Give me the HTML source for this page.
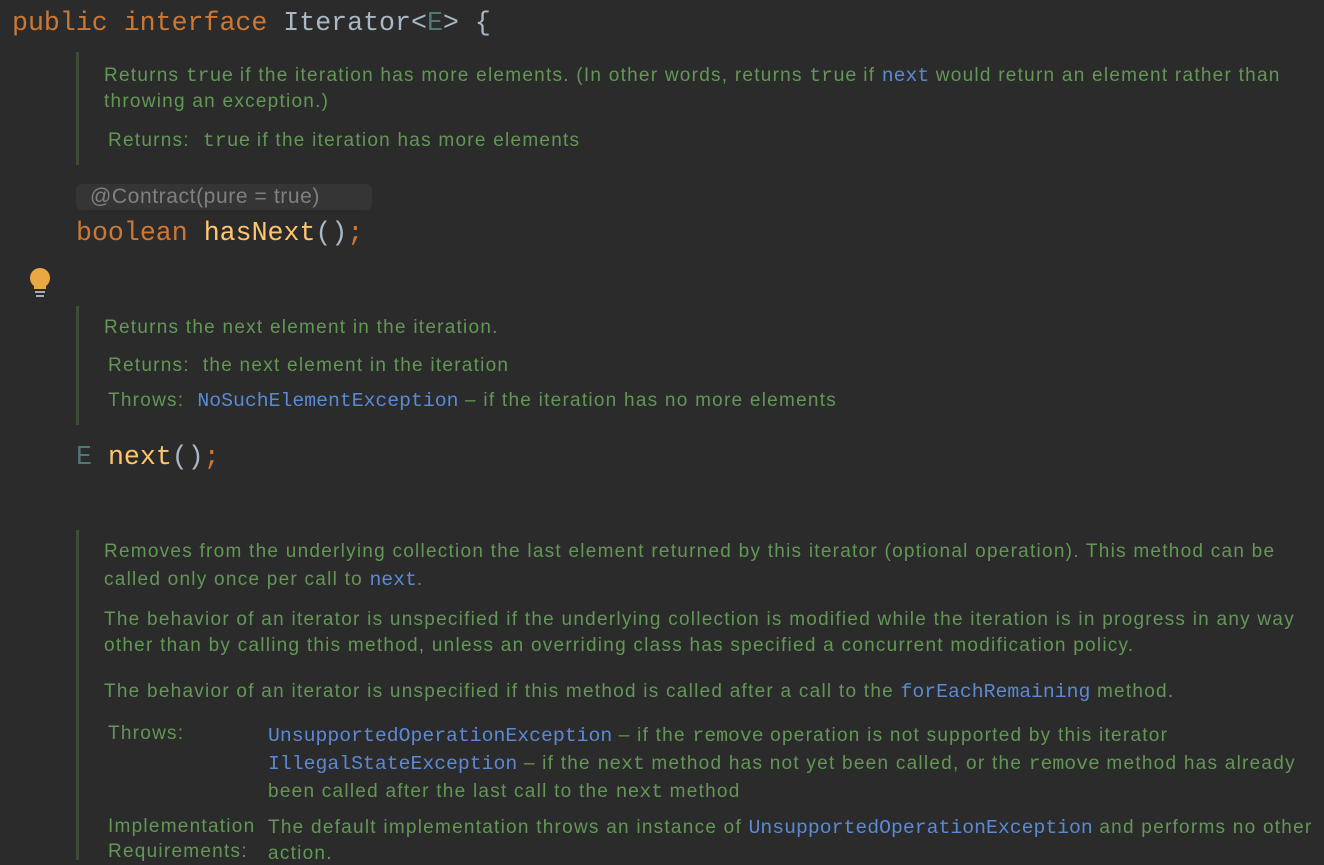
<!DOCTYPE html>
<html><head><meta charset="utf-8"><style>
body{margin:0;width:1324px;height:860px;background:#2b2b2b;overflow:hidden;position:relative;font-family:"Liberation Sans",sans-serif}
.a{position:absolute;white-space:nowrap}
.c{font-family:"Liberation Mono",monospace;font-size:26.6px;line-height:30px;color:#a9b7c6}
.d{font-size:19px;letter-spacing:1.25px;line-height:22px;color:#629755}
.m{font-family:"Liberation Mono",monospace;font-size:19.8px;letter-spacing:0}
.l{color:#5a8ad6;font-family:"Liberation Mono",monospace;font-size:19.8px;letter-spacing:0}
.k{color:#cc7832}.f{color:#ffc66d}.t{color:#507874}
.bar{position:absolute;left:76px;width:3px;background:#3e4d35}
</style></head><body>
<div class="a c" style="left:12px;top:8px"><span class="k">public interface</span> Iterator&lt;<span class="t">E</span>&gt; {</div>
<div class="bar" style="top:52px;height:113px"></div>
<div class="a d" style="left:104px;top:65px">Returns <span class="m">true</span> if the iteration has more elements. (In other words, returns <span class="m">true</span> if <span class="l">next</span> would return an element rather than</div>
<div class="a d" style="left:104px;top:91px">throwing an exception.)</div>
<div class="a d" style="left:108px;top:130px">Returns:&nbsp; <span class="m">true</span> if the iteration has more elements</div>
<div class="a" style="left:76px;top:184px;width:296px;height:26px;background:#353535;border-radius:6px"></div>
<div class="a" style="left:90px;top:184px;font-size:21px;letter-spacing:0.6px;line-height:26px;color:#808080">@Contract(pure = true)</div>
<div class="a c" style="left:76px;top:218px"><span class="k">boolean</span> <span class="f">hasNext</span>()<span class="k">;</span></div>
<svg class="a" style="left:28px;top:267px" width="24" height="30" viewBox="0 0 24 30"><path d="M12 1a10 10 0 0 0-6 18v3h12v-3a10 10 0 0 0-6-18z" fill="#e8a842"/><rect x="7" y="24" width="10" height="2" fill="#aaa"/><rect x="8" y="28" width="8" height="2" fill="#aaa"/></svg>
<div class="bar" style="top:306px;height:119px"></div>
<div class="a d" style="left:104px;top:317px">Returns the next element in the iteration.</div>
<div class="a d" style="left:108px;top:355px">Returns:&nbsp; the next element in the iteration</div>
<div class="a d" style="left:108px;top:390px">Throws:&nbsp; <span class="l">NoSuchElementException</span> – if the iteration has no more elements</div>
<div class="a c" style="left:76px;top:442px"><span class="t">E</span> <span class="f">next</span>()<span class="k">;</span></div>
<div class="bar" style="top:530px;height:330px"></div>
<div class="a d" style="left:104px;top:541px">Removes from the underlying collection the last element returned by this iterator (optional operation). This method can be</div>
<div class="a d" style="left:104px;top:569px">called only once per call to <span class="l">next</span>.</div>
<div class="a d" style="left:104px;top:609px">The behavior of an iterator is unspecified if the underlying collection is modified while the iteration is in progress in any way</div>
<div class="a d" style="left:104px;top:635px">other than by calling this method, unless an overriding class has specified a concurrent modification policy.</div>
<div class="a d" style="left:104px;top:681px">The behavior of an iterator is unspecified if this method is called after a call to the <span class="l">forEachRemaining</span> method.</div>
<div class="a d" style="left:108px;top:723px">Throws:</div>
<div class="a d" style="left:268px;top:725px"><span class="l">UnsupportedOperationException</span> – if the <span class="m">remove</span> operation is not supported by this iterator</div>
<div class="a d" style="left:268px;top:753px"><span class="l">IllegalStateException</span> – if the <span class="m">next</span> method has not yet been called, or the <span class="m">remove</span> method has already</div>
<div class="a d" style="left:268px;top:781px">been called after the last call to the <span class="m">next</span> method</div>
<div class="a d" style="left:108px;top:816px">Implementation</div>
<div class="a d" style="left:108px;top:841px">Requirements:</div>
<div class="a d" style="left:268px;top:817px">The default implementation throws an instance of <span class="l">UnsupportedOperationException</span> and performs no other</div>
<div class="a d" style="left:268px;top:843px">action.</div>
</body></html>
